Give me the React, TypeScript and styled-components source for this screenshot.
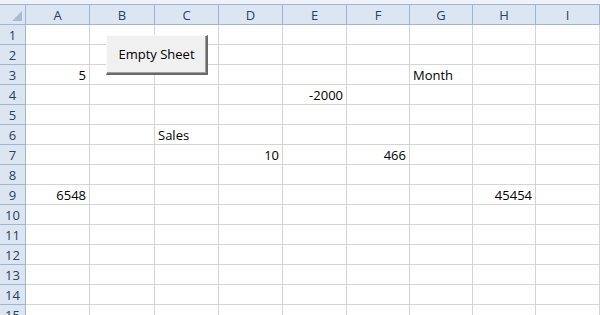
import React from "react";
import styled, { createGlobalStyle } from "styled-components";

const GlobalStyle = createGlobalStyle`
  html, body {
    margin: 0;
    padding: 0;
    background: #ffffff;
    overflow: hidden;
  }
`;

const columns = ["A", "B", "C", "D", "E", "F", "G", "H", "I"];
const rowCount = 15;

type Value = { text: string; align: "left" | "right" };
const data: Record<string, Value> = {
  A3: { text: "5", align: "right" },
  G3: { text: "Month", align: "left" },
  E4: { text: "-2000", align: "right" },
  C6: { text: "Sales", align: "left" },
  D7: { text: "10", align: "right" },
  F7: { text: "466", align: "right" },
  A9: { text: "6548", align: "right" },
  H9: { text: "45454", align: "right" },
};

const Page = styled.div`
  position: relative;
  width: 600px;
  height: 315px;
  overflow: hidden;
  font-family: "Open Sans", "Liberation Sans", sans-serif;
`;

const TopBand = styled.div`
  height: 4px;
  background: #eef3f9;
  border-bottom: 1px solid #9eb6ce;
`;

const Grid = styled.div`
  display: grid;
  grid-template-columns: 26px 64px 65px 64px 64px 64px 63px 63px 63px 64px;
  grid-auto-rows: 20px;
`;

const Corner = styled.div`
  box-sizing: border-box;
  position: relative;
  background: #dce6f2;
  border-right: 1px solid #9eb6ce;
  border-bottom: 1px solid #9eb6ce;

  &::after {
    content: "";
    position: absolute;
    right: 3px;
    bottom: 3px;
    width: 0;
    height: 0;
    border-left: 10px solid transparent;
    border-bottom: 10px solid #a9bbd3;
  }
`;

const ColHeader = styled.div`
  box-sizing: border-box;
  display: flex;
  align-items: center;
  justify-content: center;
  background: #dce6f2;
  border-right: 1px solid #9eb6ce;
  border-bottom: 1px solid #9eb6ce;
  color: #27415f;
  font-size: 13px;
`;

const RowHeader = styled(ColHeader)`
  padding-top: 1px;
`;

const Cell = styled.div<{ $align: "left" | "right" }>`
  box-sizing: border-box;
  display: flex;
  align-items: center;
  justify-content: ${(p) => (p.$align === "right" ? "flex-end" : "flex-start")};
  padding: 1px 3px 0 3px;
  border-right: 1px solid #d4d4d4;
  border-bottom: 1px solid #d4d4d4;
  color: #000000;
  font-size: 13px;
  white-space: nowrap;
  overflow: visible;
`;

const SheetButton = styled.button`
  position: absolute;
  left: 106px;
  top: 35px;
  width: 102px;
  height: 40px;
  box-sizing: border-box;
  background: #f0f0f0;
  border-style: solid;
  border-width: 1px 2px 2px 1px;
  border-color: #fbfbfb #6a6a6a #6a6a6a #fbfbfb;
  box-shadow: inset -1px -1px 0 #a0a0a0;
  font-family: "Open Sans", "Liberation Sans", sans-serif;
  font-size: 13px;
  color: #000000;
  padding: 0 0 2px 0;
`;

export default function App(): JSX.Element {
  const rows = Array.from({ length: rowCount }, (_, i) => i + 1);
  return (
    <Page>
      <GlobalStyle />
      <TopBand />
      <Grid>
        <Corner />
        {columns.map((c) => (
          <ColHeader key={c}>{c}</ColHeader>
        ))}
        {rows.map((r) => (
          <React.Fragment key={r}>
            <RowHeader>{r}</RowHeader>
            {columns.map((c) => {
              const v = data[`${c}${r}`];
              return (
                <Cell key={c} $align={v ? v.align : "left"}>
                  {v ? v.text : ""}
                </Cell>
              );
            })}
          </React.Fragment>
        ))}
      </Grid>
      <SheetButton>Empty Sheet</SheetButton>
    </Page>
  );
}
